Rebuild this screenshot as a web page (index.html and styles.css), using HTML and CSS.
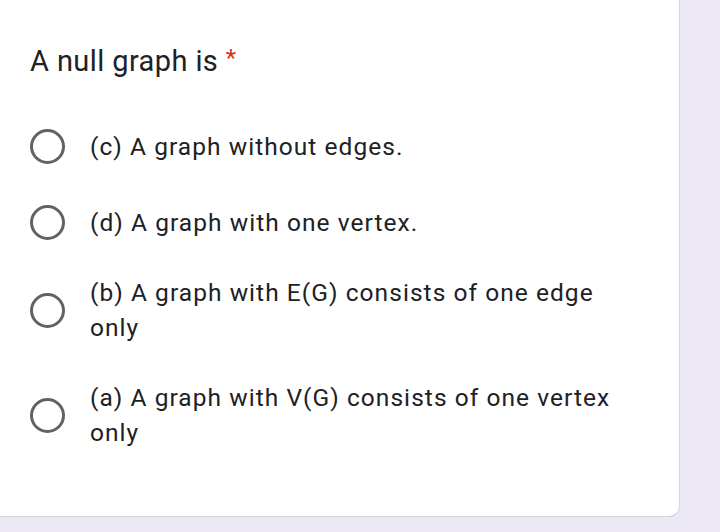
FILE: index.html
```html
<!DOCTYPE html>
<html>
<head>
<meta charset="utf-8">
<link rel="stylesheet" href="styles.css">
</head>
<body>
<div class="card">
  <div class="title">A null graph is <span class="req">*</span></div>
  <div class="options">
    <div class="option"><span class="radio"></span><span class="label">(c) A graph without edges.</span></div>
    <div class="option"><span class="radio"></span><span class="label">(d) A graph with one vertex.</span></div>
    <div class="option"><span class="radio"></span><span class="label">(b) A graph with E(G) consists of one edge only</span></div>
    <div class="option"><span class="radio"></span><span class="label">(a) A graph with V(G) consists of one vertex only</span></div>
  </div>
</div>
</body>
</html>
```
FILE: styles.css
```css
html, body {
  margin: 0;
  padding: 0;
  background: #ece8f6;
  width: 720px;
  height: 532px;
  overflow: hidden;
}
.card {
  box-sizing: border-box;
  width: 680px;
  height: 517px;
  background: #ffffff;
  border-right: 1px solid #d6d4dc;
  border-bottom: 1px solid #d6d4dc;
  border-bottom-right-radius: 11px;
  padding: 40px 0 0 30px;
  font-family: Roboto, "Liberation Sans", sans-serif;
  color: #202124;
}
.title {
  font-size: 29px;
  line-height: 36px;
  letter-spacing: 0.4px;
}
.req {
  color: #d93025;
  font-size: 24px;
  vertical-align: 5px;
}
.options {
  display: flex;
  flex-direction: column;
  gap: 35px;
  margin-top: 50px;
}
.option {
  display: flex;
  align-items: center;
  gap: 25px;
}
.option:first-child {
  margin-bottom: 6px;
}
.radio {
  flex: none;
  box-sizing: border-box;
  width: 35px;
  height: 35px;
  border: 3.5px solid #5f6368;
  border-radius: 50%;
}
.label {
  font-size: 24.5px;
  line-height: 35px;
  letter-spacing: 1.05px;
  width: 530px;
  color: #202124;
}
```
